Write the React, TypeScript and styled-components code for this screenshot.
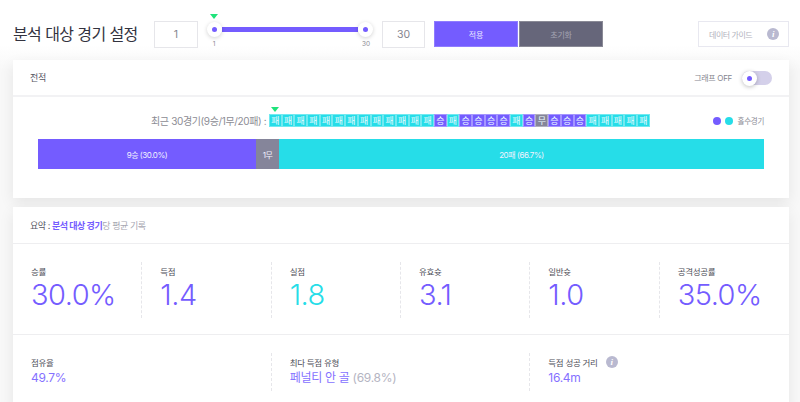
import React from "react";
import styled, { createGlobalStyle } from "styled-components";

const Global = createGlobalStyle`
  html, body { margin: 0; padding: 0; background: #fff; }
  body { width: 800px; height: 402px; overflow: hidden; font-family: Inter, "Noto Sans CJK KR", sans-serif; }
  * { box-sizing: border-box; }
`;

const Page = styled.div`
  width: 800px;
  height: 402px;
  overflow: hidden;
  background: linear-gradient(#fff 0, #fff 45px, #f8f8f8 70px);
  padding: 21px 11px 0 13px;
  display: flex;
  flex-direction: column;
`;

const TopBar = styled.div`
  display: flex;
  align-items: flex-start;
  flex: none;
  height: 27px;
  margin-bottom: 12px;
`;

const Title = styled.h1`
  margin: 0;
  width: 141px;
  font-size: 16px;
  font-weight: 400;
  line-height: 26px;
  letter-spacing: -0.6px;
  color: #33333f;
  white-space: nowrap;
`;

const RangeBox = styled.div<{ $w: number }>`
  width: ${(p) => p.$w}px;
  height: 27px;
  border: 1px solid #e6e6ea;
  background: #fff;
  color: #85858f;
  font-size: 10.5px;
  display: flex;
  align-items: center;
  justify-content: center;
`;

const Slider = styled.div`
  position: relative;
  width: 184px;
  height: 27px;
`;

const Track = styled.div`
  position: absolute;
  left: 24px;
  top: 6px;
  width: 136px;
  height: 5px;
  background: #745cff;
`;

const Thumb = styled.div<{ $left: number }>`
  position: absolute;
  left: ${(p) => p.$left}px;
  top: 1px;
  width: 15px;
  height: 15px;
  border-radius: 50%;
  background: #fff;
  box-shadow: 0 1px 4px rgba(0, 0, 0, 0.18);
  &::after {
    content: "";
    position: absolute;
    left: 5px;
    top: 5px;
    width: 5px;
    height: 5px;
    border-radius: 50%;
    background: #745cff;
  }
`;

const Tick = styled.span<{ $left: number }>`
  position: absolute;
  left: ${(p) => p.$left}px;
  top: 19px;
  width: 20px;
  text-align: center;
  font-size: 6.5px;
  line-height: 9px;
  color: #8a8a92;
`;

const Marker = styled.div<{ $left: number; $top: number }>`
  position: absolute;
  left: ${(p) => p.$left}px;
  top: ${(p) => p.$top}px;
  width: 0;
  height: 0;
  border-left: 4px solid transparent;
  border-right: 4px solid transparent;
  border-top: 5px solid #1fe37b;
`;

const ActionButton = styled.button<{ $primary?: boolean; $first?: boolean }>`
  width: 84px;
  height: 26px;
  margin: 0 1px 0 ${(p) => (p.$first ? 9 : 0)}px;
  padding: 0;
  border: 1px solid ${(p) => (p.$primary ? "#8f7cff" : "#8a8a96")};
  background: ${(p) => (p.$primary ? "#745cff" : "#66667a")};
  color: ${(p) => (p.$primary ? "#e8e4ff" : "#a4a4b2")};
  font-family: inherit;
  font-size: 8px;
  letter-spacing: -0.2px;
`;

const GuideButton = styled.div`
  margin-left: auto;
  width: 91px;
  height: 26px;
  border: 1px solid #e8e8f0;
  background: #fff;
  display: flex;
  align-items: center;
  justify-content: space-between;
  padding: 0 9px 0 10px;
  font-size: 8px;
  letter-spacing: -0.45px;
  color: #b2b2bd;
`;

const InfoBadge = styled.span`
  width: 12px;
  height: 12px;
  border-radius: 50%;
  background: #b9b9d0;
  color: #fff;
  font-family: "Liberation Serif", serif;
  font-style: italic;
  font-weight: 700;
  font-size: 9px;
  line-height: 12px;
  text-align: center;
`;

const Card = styled.section`
  background: #fff;
  box-shadow: 0 5px 14px rgba(0, 0, 0, 0.08);
`;

const RecordCard = styled(Card)`
  flex: none;
  height: 138px;
  margin-bottom: 9px;
`;

const CardHead = styled.div`
  height: 37px;
  border-bottom: 2px solid #f2f2f4;
  padding: 0 17px;
  display: flex;
  align-items: center;
  justify-content: space-between;
  font-size: 9px;
  letter-spacing: -0.2px;
  color: #55555f;
`;

const ToggleWrap = styled.div`
  display: flex;
  align-items: center;
  gap: 10px;
  font-size: 8px;
  letter-spacing: -0.3px;
  color: #85858f;
`;

const Toggle = styled.div`
  position: relative;
  width: 30px;
  height: 14px;
  border-radius: 7px;
  background: #d4d0ea;
`;

const ToggleKnob = styled.div`
  position: absolute;
  left: 0;
  top: 0;
  width: 15px;
  height: 15px;
  border-radius: 50%;
  background: #fff;
  box-shadow: 0 1px 4px rgba(0, 0, 0, 0.25);
  &::after {
    content: "";
    position: absolute;
    left: 5px;
    top: 5px;
    width: 5px;
    height: 5px;
    border-radius: 50%;
    background: #745cff;
  }
`;

const RecentRow = styled.div`
  position: relative;
  display: flex;
  align-items: center;
  height: 13px;
  margin: 17px 0 0;
  padding-left: 138px;
`;

const RecentLabel = styled.span`
  width: 119px;
  margin-right: -1px;
  font-size: 10px;
  letter-spacing: -0.36px;
  color: #8c8c94;
  white-space: nowrap;
`;

const Chips = styled.div`
  display: flex;
`;

const Chip = styled.span<{ $kind: string }>`
  width: 12.7px;
  height: 13px;
  border: 1px solid rgba(255, 255, 255, 0.35);
  background: ${(p) => (p.$kind === "승" ? "#745cff" : p.$kind === "무" ? "#85859a" : "#26dde8")};
  color: #e9fbff;
  font-size: 9px;
  line-height: 11px;
  text-align: center;
  overflow: hidden;
`;

const Legend = styled.div`
  margin-left: auto;
  margin-right: 25px;
  display: flex;
  align-items: center;
  gap: 4px;
  font-size: 7.5px;
  letter-spacing: -0.3px;
  color: #8c8c96;
`;

const Dot = styled.i<{ $color: string }>`
  width: 8px;
  height: 8px;
  border-radius: 50%;
  background: ${(p) => p.$color};
`;

const LegendText = styled.span`
  margin-left: 1px;
`;

const ResultBar = styled.div`
  display: flex;
  height: 30px;
  margin: 12px 25px 0;
`;

const BarPart = styled.div<{ $w: number; $color: string }>`
  width: ${(p) => p.$w}px;
  background: ${(p) => p.$color};
  display: flex;
  align-items: center;
  justify-content: center;
  color: #f2f2ff;
  font-size: 8px;
  letter-spacing: -0.45px;
  white-space: nowrap;
`;

const SummaryCard = styled(Card)`
  flex: 1;
`;

const SummaryHead = styled.div`
  height: 37px;
  border-bottom: 1px solid #eeeef0;
  padding: 0 17px;
  display: flex;
  align-items: center;
  font-size: 9px;
  letter-spacing: -0.45px;
  color: #55555f;
`;

const Accent = styled.b`
  color: #745cff;
  font-weight: 700;
  margin-left: 2px;
`;

const Muted = styled.span`
  color: #a8a8b2;
`;

const StatsGrid = styled.div<{ $cols: number }>`
  display: grid;
  grid-template-columns: repeat(${(p) => p.$cols}, ${(p) => 776 / p.$cols}px);
  padding: 18px 0 16px;
  border-bottom: ${(p) => (p.$cols === 6 ? "1px solid #eeeef0" : "0")};
`;

const Stat = styled.div<{ $short?: boolean; $last?: boolean }>`
  height: ${(p) => (p.$short ? 38 : 56)}px;
  padding: 2px 0 0 18px;
  border-right: ${(p) => (p.$last ? "0" : "1px dashed #e6e6ea")};
`;

const StatLabel = styled.div`
  display: flex;
  align-items: center;
  gap: 8px;
  height: 14px;
  font-size: 8.5px;
  letter-spacing: -0.3px;
  color: #4e4e58;
`;

const BigValue = styled.div<{ $cyan?: boolean }>`
  font-size: 29px;
  font-weight: 300;
  line-height: 34px;
  letter-spacing: -0.5px;
  color: ${(p) => (p.$cyan ? "#26dde8" : "#745cff")};
`;

const SmallValue = styled.div`
  font-size: 12px;
  line-height: 18px;
  letter-spacing: -0.3px;
  color: #8571ff;
`;

const Percent = styled.span`
  color: #b4b4c2;
`;

const seq = [
  ...Array(13).fill("패"), "승", "패", "승", "승", "승", "승", "패", "승", "무", "승", "승", "승",
  ...Array(5).fill("패"),
];

const bigStats = [
  { label: "승률", value: "30.0%" },
  { label: "득점", value: "1.4" },
  { label: "실점", value: "1.8", cyan: true },
  { label: "유효슛", value: "3.1" },
  { label: "일반슛", value: "1.0" },
  { label: "공격성공률", value: "35.0%" },
];

export default function App() {
  return (
    <Page>
      <Global />
      <TopBar>
        <Title>분석 대상 경기 설정</Title>
        <RangeBox $w={44}>1</RangeBox>
        <Slider>
          <Marker $left={12} $top={-7} />
          <Track />
          <Thumb $left={9} />
          <Thumb $left={160} />
          <Tick $left={6}>1</Tick>
          <Tick $left={158}>30</Tick>
        </Slider>
        <RangeBox $w={43}>30</RangeBox>
        <ActionButton $primary $first>적용</ActionButton>
        <ActionButton>초기화</ActionButton>
        <GuideButton>
          데이터 가이드
          <InfoBadge>i</InfoBadge>
        </GuideButton>
      </TopBar>

      <RecordCard>
        <CardHead>
          전적
          <ToggleWrap>
            그래프 OFF
            <Toggle>
              <ToggleKnob />
            </Toggle>
          </ToggleWrap>
        </CardHead>
        <RecentRow>
          <Marker $left={258} $top={-7} />
          <RecentLabel>최근 30경기(9승/1무/20패) :</RecentLabel>
          <Chips>
            {seq.map((s, i) => (
              <Chip key={i} $kind={s}>{s}</Chip>
            ))}
          </Chips>
          <Legend>
            <Dot $color="#745cff" />
            <Dot $color="#26dde8" />
            <LegendText>홀수경기</LegendText>
          </Legend>
        </RecentRow>
        <ResultBar>
          <BarPart $w={218} $color="#745cff">9승 (30.0%)</BarPart>
          <BarPart $w={23} $color="#85859a">1무</BarPart>
          <BarPart $w={485} $color="#26dde8">20패 (66.7%)</BarPart>
        </ResultBar>
      </RecordCard>

      <SummaryCard>
        <SummaryHead>
          요약 : <Accent>분석 대상 경기</Accent>
          <Muted>당 평균 기록</Muted>
        </SummaryHead>
        <StatsGrid $cols={6}>
          {bigStats.map((s, i) => (
            <Stat key={s.label} $last={i === 5}>
              <StatLabel>{s.label}</StatLabel>
              <BigValue $cyan={s.cyan}>{s.value}</BigValue>
            </Stat>
          ))}
        </StatsGrid>
        <StatsGrid $cols={3}>
          <Stat $short>
            <StatLabel>점유율</StatLabel>
            <SmallValue>49.7%</SmallValue>
          </Stat>
          <Stat $short>
            <StatLabel>최다 득점 유형</StatLabel>
            <SmallValue>
              페널티 안 골 <Percent>(69.8%)</Percent>
            </SmallValue>
          </Stat>
          <Stat $short $last>
            <StatLabel>
              득점 성공 거리
              <InfoBadge>i</InfoBadge>
            </StatLabel>
            <SmallValue>16.4m</SmallValue>
          </Stat>
        </StatsGrid>
      </SummaryCard>
    </Page>
  );
}
